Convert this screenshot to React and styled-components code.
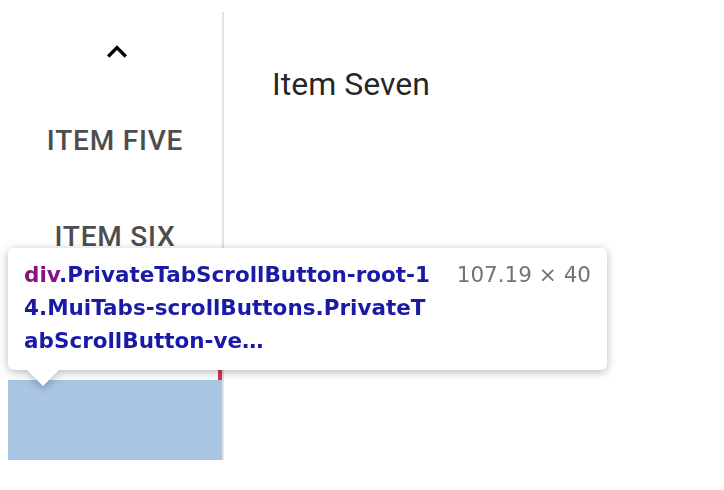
import React from "react";
import styled, { createGlobalStyle } from "styled-components";

const Global = createGlobalStyle`
  html, body { margin: 0; padding: 0; background: #fff; }
  body { width: 724px; height: 490px; overflow: hidden; position: relative; }
`;

const Page = styled.div`
  display: flex;
  padding: 12px 0 0 8px;
  height: 478px;
  font-family: Roboto, "Noto Sans", sans-serif;
`;

const TabsColumn = styled.div`
  display: flex;
  flex-direction: column;
  width: 214px;
  height: 448px;
  border-right: 2px solid #e2e2e2;
  flex-shrink: 0;
`;

const ScrollButton = styled.div`
  height: 80px;
  flex-shrink: 0;
  display: flex;
  align-items: center;
  justify-content: center;
  padding-left: 4px;
  background: ${(p) => (p.$highlight ? "#a8c5e4" : "transparent")};
  color: #000;
`;

const Tab = styled.div`
  position: relative;
  height: 96px;
  flex-shrink: 0;
  display: flex;
  align-items: center;
  justify-content: center;
  font-family: Roboto, sans-serif;
  font-weight: 500;
  font-size: 28px;
  letter-spacing: 0.8px;
  text-transform: uppercase;
  color: ${(p) => (p.$selected ? "#333" : "#4d4d4d")};
`;

const Indicator = styled.span`
  position: absolute;
  right: 0;
  top: 0;
  bottom: 0;
  width: 4px;
  background: #d8315b;
`;

const Content = styled.div`
  padding: 48px;
  font-family: Roboto, sans-serif;
  font-size: 32px;
  line-height: 48px;
  color: rgba(0, 0, 0, 0.87);
`;

const Tooltip = styled.div`
  position: absolute;
  left: 8px;
  top: 248px;
  width: 567px;
  padding: 10px 16px 13px 16px;
  background: #fff;
  border-radius: 6px;
  display: flex;
  justify-content: space-between;
  align-items: flex-start;
  filter: drop-shadow(0 2px 5px rgba(0, 0, 0, 0.28));
  font-family: "DejaVu Sans", "Liberation Sans", sans-serif;
  font-size: 21.5px;
  line-height: 33px;

  &::after {
    content: "";
    position: absolute;
    left: 19px;
    top: 100%;
    border-left: 16px solid transparent;
    border-right: 16px solid transparent;
    border-top: 16px solid #fff;
  }
`;

const Selector = styled.div`
  display: flex;
  flex-direction: column;
  font-weight: 700;
  color: #1a1aa6;
`;

const TagName = styled.span`
  color: #881280;
`;

const Dims = styled.span`
  color: #737373;
  font-weight: 400;
  white-space: nowrap;
`;

const ChevronUp = () => (
  <svg width="40" height="40" viewBox="0 0 24 24" fill="currentColor">
    <path d="M7.41 15.41L12 10.83l4.59 4.58L18 14l-6-6-6 6z" />
  </svg>
);

export default function App() {
  return (
    <>
      <Global />
      <Page>
        <TabsColumn>
          <ScrollButton>
            <ChevronUp />
          </ScrollButton>
          <Tab>Item Five</Tab>
          <Tab>Item Six</Tab>
          <Tab $selected>
            Item Seven
            <Indicator />
          </Tab>
          <ScrollButton $highlight />
        </TabsColumn>
        <Content>Item Seven</Content>
      </Page>
      <Tooltip>
        <Selector>
          <span>
            <TagName>div</TagName>.PrivateTabScrollButton-root-1
          </span>
          <span>4.MuiTabs-scrollButtons.PrivateT</span>
          <span>abScrollButton-ve…</span>
        </Selector>
        <Dims>107.19 × 40</Dims>
      </Tooltip>
    </>
  );
}
